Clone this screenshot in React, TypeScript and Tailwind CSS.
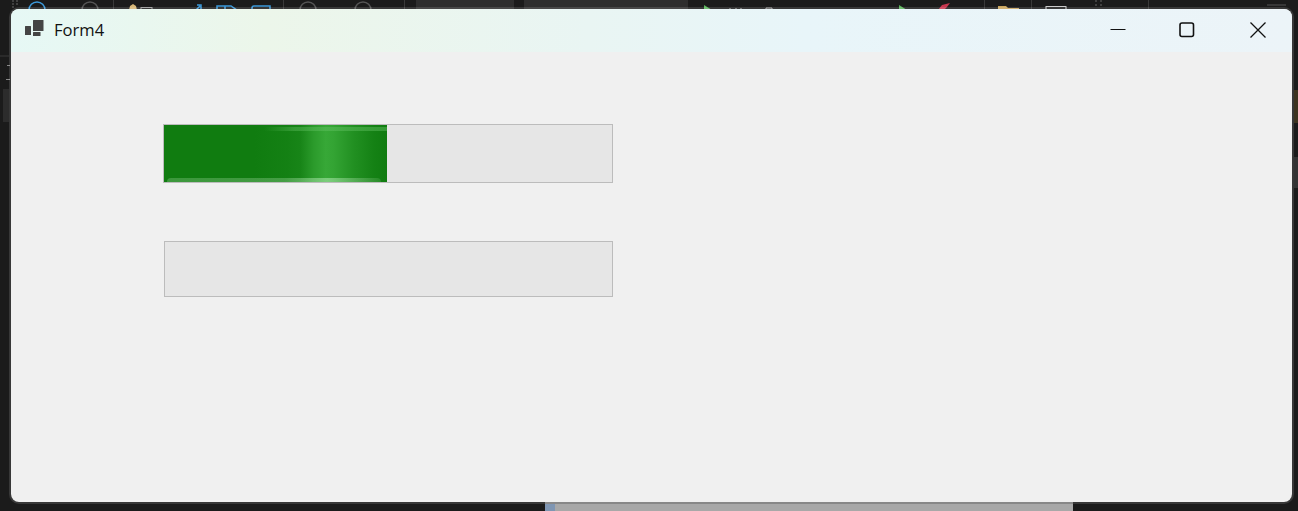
const ToolbarBits = () => (
  <svg className="absolute left-0 top-0" width="1298" height="10" fill="none">
    <path d="M12 1h2M12 4h2M12 7h2M16 1h2M16 4h2" stroke="#666" />
    <path d="M29 10a8 8 0 0 1 16 0" stroke="#3d9bdc" strokeWidth="1.5" />
    <path d="M82 10a8 8 0 0 1 16 0" stroke="#555" strokeWidth="1.5" />
    <path d="M129 10l1-4 3-2 3 2 1 4z" fill="#d8b878" />
    <rect x="141" y="7.5" width="11" height="4" stroke="#999" />
    <path d="M196 10l4-4M197 5h4v5" stroke="#3d9bdc" strokeWidth="1.5" />
    <path d="M217 10V6h14l6 4M225 6v4" stroke="#3d9bdc" strokeWidth="1.5" />
    <path d="M252 10V8a2 2 0 0 1 2-2h16v4" stroke="#3d9bdc" strokeWidth="1.5" />
    <path d="M300 10a8 8 0 0 1 16 0" stroke="#555" strokeWidth="1.5" />
    <path d="M355 10a8 8 0 0 1 16 0" stroke="#555" strokeWidth="1.5" />
    <path d="M704 5v5h8z" fill="#5bb75b" />
    <path d="M730 10V8M736 10V8M741 10V8M766 10V8h6v2" stroke="#aaa" />
    <path d="M899 5v5h8z" fill="#5bb75b" />
    <path d="M938 10l4-5 8-2-3 4-3 3z" fill="#c8374f" />
    <path d="M998 10V6h8l2 2h11v2z" fill="#c9a55c" />
    <rect x="1046" y="6.5" width="20" height="5" stroke="#ccc" />
    <path d="M1095 1h2M1100 1h2M1095 5h2M1100 5h2" stroke="#666" />
    <path d="M1267 5h19" stroke="#555" />
  </svg>
)

const Seps = () => (
  <div className="absolute left-0 top-0 flex h-[9px] w-full">
    <div className="ml-[113px] w-px bg-[#3a3a3a]" />
    <div className="ml-[169px] w-px bg-[#3a3a3a]" />
    <div className="ml-[120px] w-px bg-[#3a3a3a]" />
    <div className="ml-[11px] w-[98px] bg-[#2e2e2e]" />
    <div className="ml-[10px] w-[164px] bg-[#2e2e2e]" />
    <div className="ml-[296px] w-px bg-[#3a3a3a]" />
    <div className="ml-[46px] w-px bg-[#3a3a3a]" />
    <div className="ml-[116px] w-px bg-[#3a3a3a]" />
  </div>
)

const SideBits = () => (
  <>
    <div className="absolute left-0 top-[55px] h-[2px] w-[9px] bg-[#2a2a2a]" />
    <div className="absolute left-[7px] top-[65px] h-px w-[3px] bg-[#888888]" />
    <div className="absolute left-[6px] top-[79px] h-px w-[4px] bg-[#888888]" />
    <div className="absolute left-[3px] top-[89px] h-[33px] w-[6px] bg-[#2c2c2c]" />
    <div className="absolute right-0 top-[90px] h-[33px] w-[4px] bg-[#3d3420]" />
    <div className="absolute right-0 top-[157px] h-[31px] w-[4px] bg-[#333333]" />
  </>
)

export default function App() {
  return (
    <div className="relative h-[511px] w-[1298px] overflow-hidden bg-[#1b1b1b] font-['Open_Sans','Noto_Sans',sans-serif]">
      <Seps />
      <ToolbarBits />
      <SideBits />
      <div className="absolute bottom-0 left-[545px] flex h-[9px] w-[528px] border-t-2 border-[#777777]">
        <div className="w-[10px] bg-[#7f96b3]" />
        <div className="flex-1 bg-[#a8a8a8]" />
      </div>

      <div className="relative pl-[9px] pt-[7px]">
        <div className="relative flex h-[497px] w-[1285px] flex-col overflow-hidden rounded-[10px] border-2 border-white/[0.13] bg-[#f0f0f0] bg-clip-padding">
          <div className="flex h-[43px] shrink-0 items-center bg-[linear-gradient(90deg,#e6f8f5_0%,#ecf6ea_20%,#e9f5f3_45%,#e8f5f9_62%,#ecf4f8_100%)]">
            <svg className="mb-[3px] ml-[13px]" width="20" height="18" viewBox="0 0 20 18" fill="#444444">
              <rect x="9" y="0" width="10.5" height="11" rx="0.5" />
              <rect x="1" y="6" width="6" height="9" rx="0.5" />
              <rect x="9" y="12" width="7.5" height="4" rx="0.5" />
            </svg>
            <span className="mb-[1px] ml-[10px] text-[16.6px] leading-none text-[#111111]">Form4</span>
            <div className="mb-[2px] ml-auto flex items-center">
              <svg width="16" height="16" viewBox="0 0 16 16" stroke="#111" strokeWidth="1" fill="none">
                <path d="M0.5 7.5h15" />
              </svg>
              <svg className="ml-[53px]" width="16" height="16" viewBox="0 0 16 16" stroke="#111" strokeWidth="1.6" fill="none">
                <rect x="1" y="1" width="13.5" height="13.5" rx="2" />
              </svg>
              <svg className="ml-[55px] mr-[26px]" width="16" height="16" viewBox="0 0 16 16" stroke="#111" strokeWidth="1.3" fill="none">
                <path d="M0.5 0.5l15 15M15.5 0.5l-15 15" />
              </svg>
            </div>
          </div>

          <div className="flex flex-col pl-[152px] pt-[72px]">
            <div className="relative flex h-[59px] w-[450px] border border-[#bcbcbc] bg-[#e6e6e6]">
              <div className="relative h-full w-[223px] overflow-hidden bg-[#107c10]">
                <div className="absolute inset-y-0 left-[90px] w-[133px] bg-[linear-gradient(90deg,rgba(55,168,55,0)_0%,rgba(55,168,55,0.1)_25%,rgba(55,168,55,0.2)_35%,rgba(55,168,55,0.7)_45%,rgba(55,168,55,1)_54%,rgba(55,168,55,0.9)_60%,rgba(55,168,55,0.45)_75%,rgba(55,168,55,0.12)_90%,rgba(55,168,55,0)_100%)]" />
                <div className="absolute left-[100px] right-0 top-[2px] h-[4px] bg-[linear-gradient(90deg,rgba(110,200,110,0)_0%,rgba(110,200,110,0.35)_25%,rgba(110,200,110,0.4)_100%)]" />
                <div className="absolute bottom-0 left-[3px] right-[6px] h-[4px] rounded-t-[4px] bg-[linear-gradient(90deg,rgba(160,215,160,0.3)_0%,rgba(160,215,160,0.35)_55%,rgba(170,230,170,0.6)_75%,rgba(160,215,160,0.35)_90%,rgba(160,215,160,0.15)_100%)]" />
              </div>
            </div>
            <div className="ml-px mt-[58px] h-[56px] w-[449px] border border-[#bcbcbc] bg-[#e6e6e6]" />
          </div>
        </div>
      </div>
    </div>
  )
}
